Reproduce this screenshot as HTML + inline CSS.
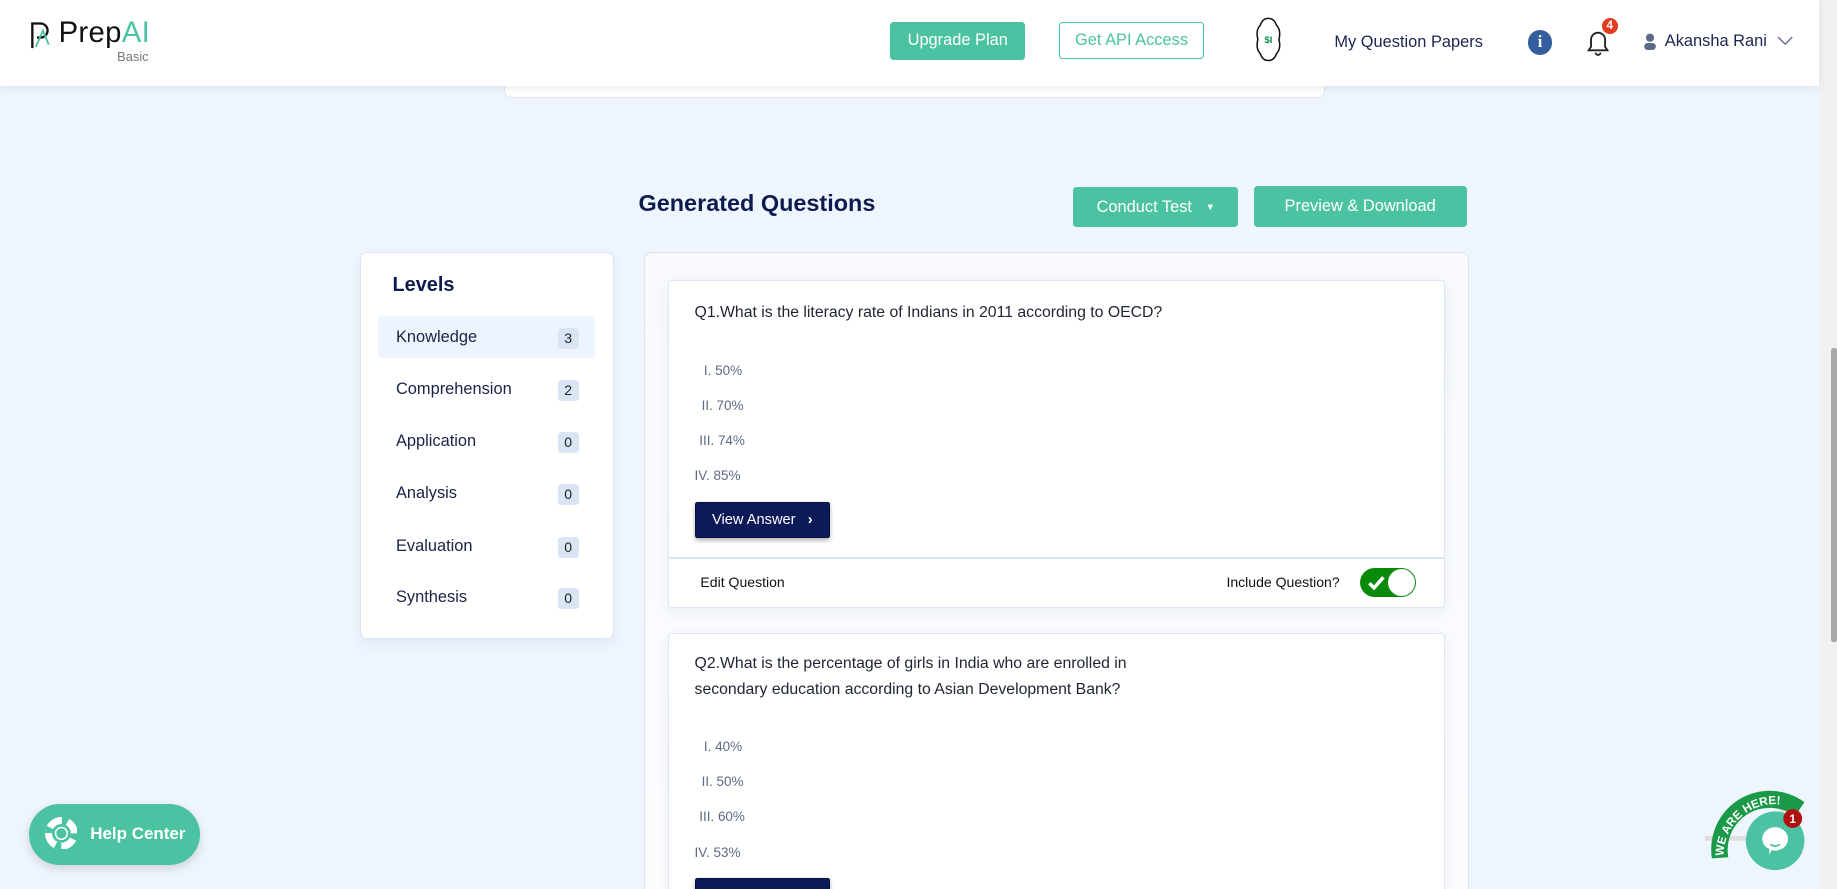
<!DOCTYPE html>
<html><head><meta charset="utf-8">
<style>
html,body{margin:0;padding:0;}
html{width:1837px;height:889px;overflow:hidden;background:#eef5fe;}
body{zoom:1.17156;width:1568px;height:759px;position:relative;overflow:hidden;font-family:"Liberation Sans",Arial,sans-serif;color:#0e1b4d;background:#eff5fe;}
.a{position:absolute;}
.hdr{left:0;top:0;width:1553px;height:73px;background:#fff;box-shadow:0 2px 8px rgba(0,0,0,.08);z-index:2;}
.btn{position:absolute;display:flex;align-items:center;justify-content:center;border-radius:3px;font-size:14px;}
.panel{background:#fff;border:1px solid #dbe5f2;border-radius:6px;}
.lvl{position:absolute;left:323px;width:185px;height:36px;font-size:14px;color:#1a2347;}
.lvl span{position:absolute;left:15px;top:10px;}
.lvl b{position:absolute;left:153px;top:10px;width:18px;height:18px;background:#dae5f4;border-radius:3px;font-weight:normal;font-size:12px;text-align:center;line-height:18px;color:#222;}
.card{position:absolute;left:570px;width:662px;background:#fff;border:1px solid #dde6f2;border-radius:3px;box-shadow:0 3px 10px rgba(40,70,120,.07);}
.q{position:absolute;left:22px;font-size:13.5px;color:#1f2533;line-height:22px;}
.opt{position:absolute;font-size:11.5px;color:#5c6b85;}
.va{position:absolute;left:22px;width:114px;height:29px;background:#0c1a57;border:1px solid #06103a;border-radius:2px;color:#fff;font-size:12.5px;box-shadow:0 2px 4px rgba(0,0,0,.3);}
</style></head><body>
<div class="a" style="left:430px;top:60px;width:699px;height:22px;background:#fff;border:1px solid #dfe6ef;border-radius:0 0 6px 6px;"></div>
<div class="a hdr">
  <svg class="a" style="left:26px;top:17px" width="22" height="26" viewBox="0 0 22 26"><path d="M2 24V3h7a6 6 0 0 1 0 12H6" fill="none" stroke="#111" stroke-width="2"/><path d="M5 23L11 9l5 12" fill="none" stroke="#4bc2a1" stroke-width="1.6"/></svg>
  <div class="a" style="left:50px;top:14px;font-size:25px;color:#111;letter-spacing:.3px;">Prep<span style="color:#4bc2a1">AI</span></div>
  <div class="a" style="left:100px;top:42px;font-size:11px;color:#777;">Basic</div>
  <div class="btn" style="left:760px;top:19px;width:115px;height:32px;background:#4bc2a1;color:#fff;">Upgrade Plan</div>
  <div class="btn" style="left:904px;top:19px;width:122px;height:30px;border:1px solid #4bc2a1;color:#4bc2a1;background:#fff;">Get API Access</div>
  <svg class="a" style="left:1069px;top:14px" width="28" height="40" viewBox="0 0 28 40"><path d="M14 2c4 0 6 3 7 6 3 3 3 8 2 12 1 4 1 9-2 12-1 3-3 6-7 6s-6-3-7-6c-3-3-3-8-2-12-1-4-1-9 2-12 1-3 3-6 7-6z" fill="#fff" stroke="#111" stroke-width="1.3"/><text x="14" y="23" font-size="8" font-weight="bold" fill="#0a8a4a" text-anchor="middle" font-family="Liberation Sans">$I</text></svg>
  <div class="a" style="left:1139px;top:28px;font-size:14px;color:#1b2550;">My Question Papers</div>
  <div class="a" style="left:1304px;top:26px;width:21px;height:21px;border-radius:50%;background:#355e9e;color:#fff;font-size:14px;font-weight:bold;text-align:center;line-height:21px;font-family:'Liberation Serif',serif;">i</div>
  <svg class="a" style="left:1352px;top:24px" width="24" height="26" viewBox="0 0 24 26"><path d="M4 19h16l-2-3v-6a6 6 0 0 0-12 0v6z M10 21a2 2 0 0 0 4 0" fill="none" stroke="#222" stroke-width="1.6"/></svg>
  <div class="a" style="left:1367px;top:15px;width:14px;height:14px;border-radius:50%;background:#e53a1e;color:#fff;font-size:10px;font-weight:bold;text-align:center;line-height:14px;">4</div>
  <svg class="a" style="left:1402px;top:28px" width="12" height="15" viewBox="0 0 12 15"><circle cx="6" cy="4" r="3.5" fill="#5c6b8a"/><rect x="1" y="8.5" width="10" height="6" rx="3" fill="#5c6b8a"/></svg>
  <div class="a" style="left:1421px;top:27px;font-size:14px;color:#1b2550;">Akansha Rani</div>
  <svg class="a" style="left:1517px;top:31px" width="14" height="9" viewBox="0 0 14 9"><path d="M1 1l6 6 6-6" fill="none" stroke="#5c6b8a" stroke-width="1.2"/></svg>
</div>
<div class="a" style="left:1553px;top:0;width:15px;height:759px;background:#f1f1f1;"></div>
<div class="a" style="left:1563px;top:297px;width:5px;height:251px;background:#a8a8a8;border-radius:2px;"></div>

<div class="a" style="left:545px;top:162px;font-size:20px;font-weight:bold;color:#0e1b4d;">Generated Questions</div>
<div class="btn" style="left:916px;top:160px;width:141px;height:34px;background:#4bc2a1;color:#fff;">Conduct Test&nbsp;&nbsp;&nbsp;<span style="font-size:8px">▼</span></div>
<div class="btn" style="left:1070px;top:159px;width:182px;height:35px;background:#4bc2a1;color:#fff;">Preview &amp; Download</div>

<div class="a panel" style="left:307px;top:215px;width:215px;height:329px;box-shadow:0 4px 10px rgba(40,70,120,.06);"></div>
<div class="a" style="left:335px;top:234px;font-size:17px;font-weight:bold;color:#0e1b4d;">Levels</div>
<div class="lvl" style="top:270px;background:#eef4fd;border-radius:3px;"><span>Knowledge</span><b>3</b></div>
<div class="lvl" style="top:314px;"><span>Comprehension</span><b>2</b></div>
<div class="lvl" style="top:359px;"><span>Application</span><b>0</b></div>
<div class="lvl" style="top:403px;"><span>Analysis</span><b>0</b></div>
<div class="lvl" style="top:448px;"><span>Evaluation</span><b>0</b></div>
<div class="lvl" style="top:492px;"><span>Synthesis</span><b>0</b></div>

<div class="a panel" style="left:550px;top:215px;width:702px;height:560px;background:linear-gradient(#f7f9fd,#fbfcfe);"></div>
<div class="card" style="top:239px;height:278px;">
  <div class="q" style="top:16px;">Q1.What is the literacy rate of Indians in 2011 according to OECD?</div>
  <div class="opt" style="left:30px;top:70px;">I. 50%</div>
  <div class="opt" style="left:28px;top:100px;">II. 70%</div>
  <div class="opt" style="left:26px;top:130px;">III. 74%</div>
  <div class="opt" style="left:22px;top:160px;">IV. 85%</div>
  <div class="btn va" style="top:189px;">View Answer&nbsp;&nbsp;&nbsp;<b>&#8250;</b></div>
  <div class="a" style="left:0;top:236px;width:662px;height:1px;background:#dbe4f1;"></div>
  <div class="a" style="left:27px;top:250px;font-size:12px;color:#111;">Edit Question</div>
  <div class="a" style="left:476px;top:250px;font-size:12px;color:#111;">Include Question?</div>
  <div class="a" style="left:590px;top:245px;width:48px;height:25px;border-radius:13px;background:#0a8a0a;"></div>
  <div class="a" style="left:614px;top:246px;width:23px;height:23px;border-radius:50%;background:#fff;"></div>
  <svg class="a" style="left:596px;top:251px" width="16" height="13" viewBox="0 0 16 13"><path d="M2 7l4 4 8-9" fill="none" stroke="#fff" stroke-width="3"/></svg>
</div>
<div class="card" style="top:540px;height:240px;">
  <div class="q" style="top:15px;">Q2.What is the percentage of girls in India who are enrolled in<br>secondary education according to Asian Development Bank?</div>
  <div class="opt" style="left:30px;top:90px;">I. 40%</div>
  <div class="opt" style="left:28px;top:120px;">II. 50%</div>
  <div class="opt" style="left:26px;top:150px;">III. 60%</div>
  <div class="opt" style="left:22px;top:180px;">IV. 53%</div>
  <div class="btn va" style="top:209px;"></div>
</div>

<div class="a" style="left:25px;top:686px;width:146px;height:52px;border-radius:26px;background:#4bc2a1;box-shadow:0 3px 8px rgba(0,0,0,.15);"></div>
<svg class="a" style="left:38px;top:697px" width="28" height="28" viewBox="0 0 28 28"><circle cx="14" cy="14" r="11" fill="none" stroke="#fff" stroke-width="6"/><circle cx="14" cy="14" r="11" fill="none" stroke="#4bc2a1" stroke-width="6" stroke-dasharray="5 12.3"/><circle cx="14" cy="14" r="5" fill="none" stroke="#fff" stroke-width="1.3"/></svg>
<div class="a" style="left:77px;top:703px;font-size:14.5px;color:#fff;font-weight:bold;">Help Center</div>

<svg class="a" style="left:1450px;top:655px" width="100" height="100" viewBox="0 0 100 100">
  <path d="M5 61H58" stroke="#ddd" stroke-width="4"/><path d="M57 58L79 26" stroke="#ddd" stroke-width="4"/>
  <path d="M11 78A50 50 0 0 1 90 30L82 42A36 36 0 0 0 25 77z" fill="#1a9a48"/>
  <path id="arc" d="M21 76A44 44 0 0 1 84 36" fill="none"/>
  <text font-size="10" font-weight="bold" fill="#fff" font-family="Liberation Sans"><textPath href="#arc">WE ARE HERE!</textPath></text>
  <circle cx="65" cy="63" r="25" fill="#4bc2a1"/>
  <path d="M54 62a11 10 0 1 1 8 9l-2 4v-5a10 10 0 0 1-6-8z" fill="#fff"/>
  <path d="M61 66q4 3 8 0" stroke="#4bc2a1" stroke-width="1.5" fill="none"/>
  <circle cx="80" cy="44" r="8" fill="#b01010"/>
  <text x="80" y="48" font-size="10" font-weight="bold" fill="#fff" text-anchor="middle" font-family="Liberation Sans">1</text>
</svg>
</body></html>
